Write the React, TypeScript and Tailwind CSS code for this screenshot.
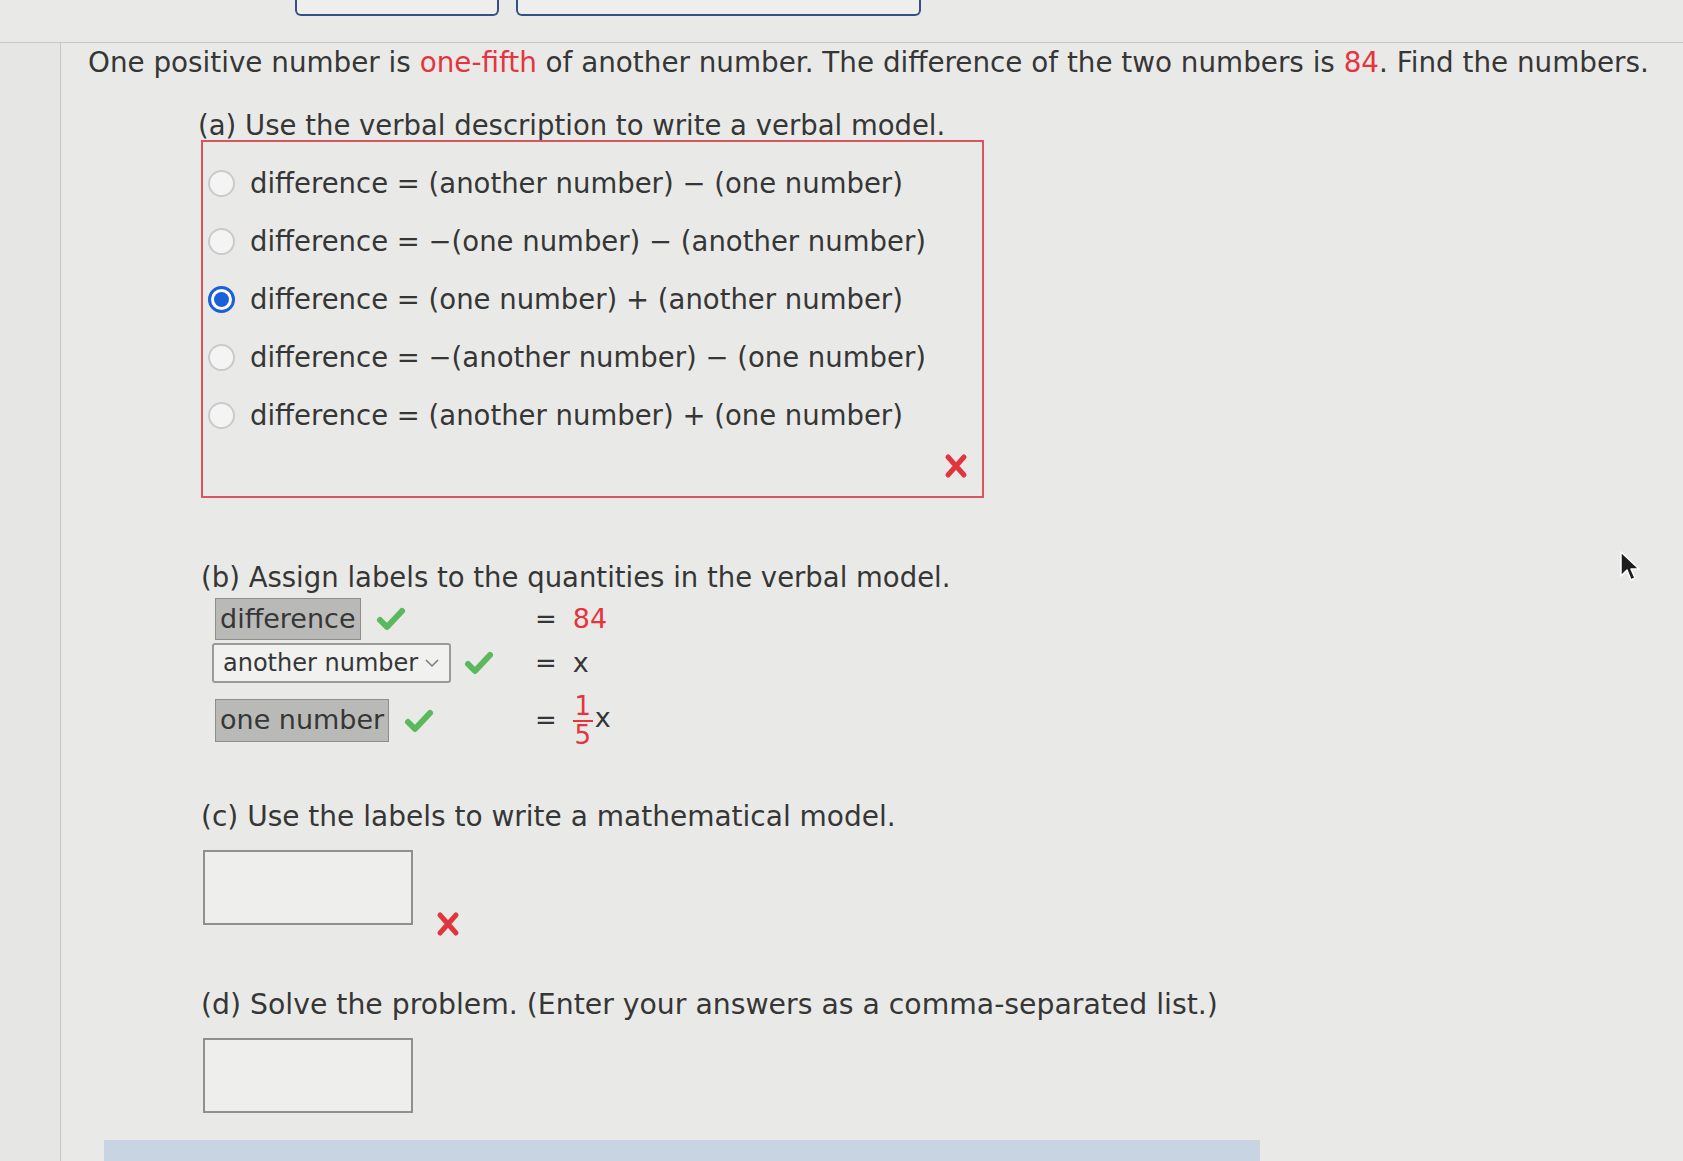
import React from 'react';

const OPTIONS = [
  'difference = (another number) − (one number)',
  'difference = −(one number) − (another number)',
  'difference = (one number) + (another number)',
  'difference = −(another number) − (one number)',
  'difference = (another number) + (one number)',
];
const SELECTED = 2;

const Check: React.FC = () => (
  <svg width="32" height="28" viewBox="0 0 32 28" className="shrink-0">
    <path d="M5 15 L12 22 L27 6" fill="none" stroke="#5cb85c" strokeWidth="6" strokeLinecap="round" strokeLinejoin="round" />
  </svg>
);

const Cross: React.FC = () => (
  <svg width="28" height="28" viewBox="0 0 28 28" className="shrink-0">
    <path d="M6 5 L22 23 M22 5 L6 23" fill="none" stroke="#e2343f" strokeWidth="5" strokeLinecap="round" />
  </svg>
);

const Radio: React.FC<{ on: boolean }> = ({ on }) =>
  on ? (
    <span className="w-[27px] h-[27px] rounded-full border-[3px] border-[#1b5fd9] bg-white flex items-center justify-center shrink-0">
      <span className="w-[15px] h-[15px] rounded-full bg-[#1b5fd9]" />
    </span>
  ) : (
    <span className="w-[27px] h-[27px] rounded-full border-2 border-[#c9cac9] bg-[#f4f4f4] shrink-0" />
  );

const App: React.FC = () => {
  return (
    <div className="w-full h-[1161px] overflow-hidden bg-[#e9eae8] text-[#363636] font-['DejaVu_Sans',Verdana,sans-serif] relative">
      {/* top tabs */}
      <div className="h-[43px] flex items-start border-b border-[#c6c7c5]">
        <div className="ml-[295px] w-[204px] h-[16px] border-2 border-t-0 border-[#34508a] rounded-b-md bg-[#eeeeec]" />
        <div className="ml-[17px] w-[405px] h-[16px] border-2 border-t-0 border-[#34508a] rounded-b-md bg-[#eeeeec]" />
      </div>

      <div className="flex">
        <div className="w-[61px] h-[1120px] border-r border-[#c6c7c5] bg-[#e6e7e5] shrink-0" />

        <div className="flex-1 flex flex-col">
          {/* question */}
          <p className="mt-[5px] ml-[27px] text-[27.8px] leading-[30px] whitespace-nowrap">
            One positive number is <span className="text-[#e5343e]">one-fifth</span> of another number. The difference of
            the two numbers is <span className="text-[#e5343e]">84</span>. Find the numbers.
          </p>

          {/* (a) */}
          <p className="mt-[32px] ml-[137px] text-[27.5px] leading-[30px] whitespace-nowrap">(a) Use the verbal description to write a verbal model.</p>
          <div className="ml-[140px] w-[783px] h-[358px] border-2 border-[#d9545c] flex flex-col pl-[5px] pt-[12px] pr-[12px]">
            {OPTIONS.map((o, i) => (
              <div key={i} className="h-[58px] flex items-center gap-[15px]">
                <Radio on={i === SELECTED} />
                <span className="text-[27.5px] leading-[30px] whitespace-nowrap">{o}</span>
              </div>
            ))}
            <div className="mt-[8px] flex justify-end">
              <Cross />
            </div>
          </div>

          {/* (b) */}
          <p className="mt-[64px] ml-[140px] text-[27.5px] leading-[30px] whitespace-nowrap">(b) Assign labels to the quantities in the verbal model.</p>
          <div className="ml-[151px] flex flex-col">
            <div className="mt-[6px] h-[42px] flex items-center">
              <div className="w-[323px] flex items-center gap-[14px]">
                <span className="ml-[3px] h-[42px] px-[4px] flex items-center bg-[#b9bab8] border border-[#8d8e8c] text-[27px]">difference</span>
                <Check />
              </div>
              <span className="text-[26px]">=</span>
              <span className="ml-[16px] text-[27px] text-[#e5343e]">84</span>
            </div>
            <div className="mt-[3px] h-[40px] flex items-center">
              <div className="w-[323px] flex items-center gap-[12px]">
                <span className="h-[40px] w-[239px] px-[9px] flex items-center justify-between bg-[#f1f1f0] border-2 border-[#9a9b99] rounded-[3px] text-[24px]">
                  another number
                  <svg width="16" height="10" viewBox="0 0 16 10">
                    <path d="M2 2 L8 8 L14 2" fill="none" stroke="#7a7a7a" strokeWidth="1.5" />
                  </svg>
                </span>
                <Check />
              </div>
              <span className="text-[26px]">=</span>
              <span className="ml-[16px] text-[27px]">x</span>
            </div>
            <div className="mt-[16px] h-[43px] flex items-center">
              <div className="w-[323px] flex items-center gap-[14px]">
                <span className="ml-[3px] h-[43px] px-[4px] flex items-center bg-[#b9bab8] border border-[#8d8e8c] text-[27px]">one number</span>
                <Check />
              </div>
              <span className="text-[26px]">=</span>
              <span className="ml-[16px] inline-flex flex-col items-center text-[#e5343e] text-[26px] leading-[27px]">
                <span>1</span>
                <span className="w-[20px] border-t-2 border-[#e5343e]" />
                <span>5</span>
              </span>
              <span className="ml-[2px] text-[27px] -mt-[4px]">x</span>
            </div>
          </div>

          {/* (c) */}
          <p className="mt-[60px] ml-[140px] text-[28px] leading-[30px] whitespace-nowrap">(c) Use the labels to write a mathematical model.</p>
          <div className="mt-[18px] ml-[142px] flex items-start">
            <div className="w-[210px] h-[75px] border-2 border-[#8f908e] bg-[#eeeeec]" />
            <div className="mt-[60px] ml-[21px]">
              <Cross />
            </div>
          </div>

          {/* (d) */}
          <p className="mt-[52px] ml-[140px] text-[28.3px] leading-[30px] whitespace-nowrap">(d) Solve the problem. (Enter your answers as a comma-separated list.)</p>
          <div className="mt-[18px] ml-[142px] w-[210px] h-[75px] border-2 border-[#8f908e] bg-[#eeeeec]" />

          <div className="mt-[27px] ml-[43px] w-[1156px] h-[24px] bg-[#c8d4e1]" />
        </div>
      </div>

      {/* mouse cursor */}
      <svg className="absolute left-[1619px] top-[550px]" width="22" height="34" viewBox="0 0 22 34">
        <path d="M2 2 L2 26 L8 20 L12 30 L16 28 L12 19 L20 19 Z" fill="#1e1e1e" stroke="#ffffff" strokeWidth="1.5" strokeLinejoin="round" />
      </svg>
    </div>
  );
};

export default App;
